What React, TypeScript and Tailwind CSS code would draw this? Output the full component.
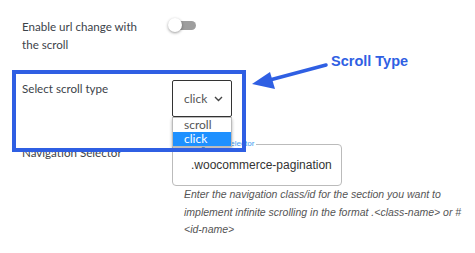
import React from "react"

const font = { fontFamily: 'Lato, "Open Sans", sans-serif' }
const arial = { fontFamily: '"Liberation Sans", Arial, sans-serif' }

export default function App() {
  return (
    <div className="relative w-[475px] h-[253px] bg-white overflow-hidden text-[#3c434a]" style={font}>
      <div className="flex flex-col pl-[22px] pt-[18px]">
        {/* url change toggle */}
        <div className="flex">
          <div className="w-[150px] text-[11.6px] leading-[18px] text-[#3c434a]">
            Enable url change with
            <br />
            the scroll
          </div>
          <div className="relative w-[30px] h-[14px] -ml-[4px]">
            <div className="absolute left-[4px] top-[3px] w-[24px] h-[9px] rounded-full bg-[#9e9e9e]" />
            <div className="absolute left-0 top-0 w-[14px] h-[14px] rounded-full bg-white shadow-[0_1px_3px_rgba(0,0,0,0.4)]" />
          </div>
        </div>

        {/* scroll type */}
        <div className="flex mt-[26px]">
          <div className="w-[150px] text-[11.6px] leading-[18px]">Select scroll type</div>
          <div className="relative">
            <div className="flex items-center justify-between w-[60px] h-[37px] border border-[#333] rounded-[2px] pl-[11px] pr-[8px] text-[12px] text-[#555]">
              <span>click</span>
              <svg width="9" height="6" viewBox="0 0 9 6" fill="none" stroke="#444" strokeWidth="1.4">
                <path d="M1 1l3.5 3.5L8 1" />
              </svg>
            </div>
          </div>
        </div>

        {/* navigation selector */}
        <div className="flex mt-[27px]">
          <div className="w-[150px] text-[11.6px] leading-[18px]">Navigation Selector</div>
          <div className="flex flex-col">
            <div
              className="relative w-[170px] h-[42px] border border-[#bbb] rounded-[4px] flex items-center pl-[18px] text-[12px] text-[#333]"
              style={arial}
            >
              <span className="absolute -top-[6px] left-[10px] bg-white px-[2px] text-[8px] leading-[10px] text-[#3b9cf0]">
                Navigation Selector
              </span>
              .woocommerce-pagination
            </div>
            <p
              className="w-[285px] ml-[12px] text-[10.5px] leading-[17.5px] italic text-[#555]"
              style={arial}
            >
              Enter the navigation class/id for the section you want to implement infinite scrolling in the format .&lt;class-name&gt; or #<wbr />&lt;id-name&gt;
            </p>
          </div>
        </div>
      </div>

      {/* open dropdown list */}
      <div className="absolute left-[172px] top-[117px] w-[60px] bg-white border border-[#bbb] shadow-[0_2px_3px_rgba(0,0,0,0.3)] text-[12px] leading-[14px]">
        <div className="pl-[11px] text-[#555]">scroll</div>
        <div className="pl-[11px] bg-[#1e90ff] text-white">click</div>
      </div>

      {/* annotation */}
      <div className="absolute left-[12px] top-[70px] w-[234px] h-[82px] border-[4px] border-[#2f5fe3]" />
      <svg className="absolute left-[248px] top-[60px]" width="90" height="35" viewBox="0 0 90 35">
        <path d="M78 5 L18 21" stroke="#2f5fe3" strokeWidth="3.5" strokeLinecap="round" />
        <path d="M4 24 L22 12 L27 29 Z" fill="#2f5fe3" />
      </svg>
      <div className="absolute left-[331px] top-[51px] text-[14.5px] font-bold text-[#2f5fe3]" style={arial}>
        Scroll Type
      </div>
    </div>
  )
}
